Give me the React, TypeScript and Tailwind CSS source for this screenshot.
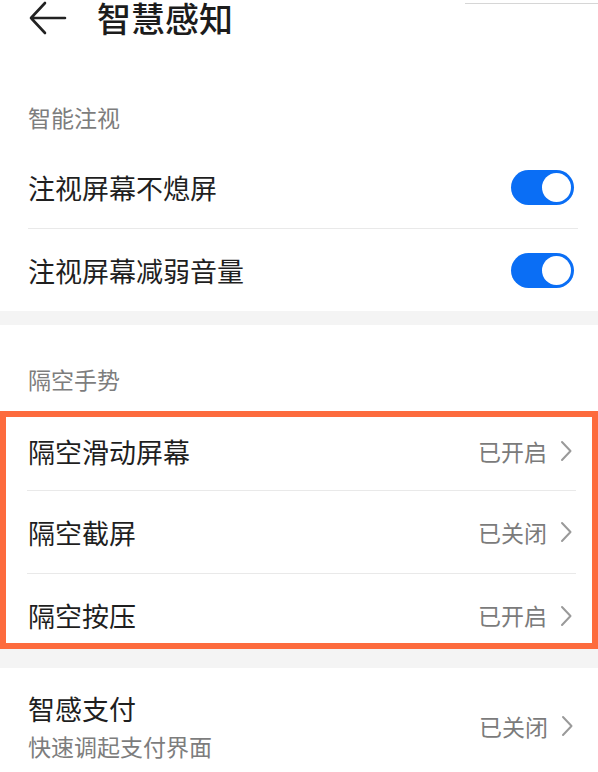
import React from "react";

const FONT = "font-['Noto_Sans_CJK_SC','Noto_Sans',sans-serif]";

/** Blue on-state switch */
function Toggle() {
  return (
    <div className="flex h-[35px] w-[63px] items-center justify-end rounded-full bg-[#0a6ef5] px-[3px]">
      <div className="h-[29px] w-[29px] rounded-full bg-white" />
    </div>
  );
}

function Chevron() {
  return (
    <svg width="14" height="22" viewBox="0 0 14 22" fill="none" className="shrink-0">
      <path d="M3 2 L11.5 11 L3 20" stroke="#9a9a9a" strokeWidth="2" strokeLinecap="round" strokeLinejoin="round" />
    </svg>
  );
}

function Value({ text }: { text: string }) {
  return (
    <div className="flex items-center gap-[12px]">
      <span className="text-[23px] leading-none text-[#7b7b7b]">{text}</span>
      <Chevron />
    </div>
  );
}

function Divider({ className = "" }: { className?: string }) {
  return <div className={`h-px bg-[#e9e9e9] ${className}`} />;
}

export default function App() {
  return (
    <div className={`relative h-[772px] w-[598px] overflow-hidden bg-white ${FONT}`}>
      {/* Header */}
      <div className="flex h-[36px] items-center">
        <svg width="40" height="34" viewBox="0 0 40 34" fill="none" className="ml-[28px]">
          <path d="M17 2 L3 17 L17 32 M3 17 L37 17" stroke="#222" strokeWidth="2.6" strokeLinecap="round" strokeLinejoin="round" />
        </svg>
        <h1 className="ml-[29px] text-[34px] font-medium leading-none text-[#1c1c1c]">智慧感知</h1>
        <div className="mb-auto ml-auto mt-[3px] h-px w-[133px] bg-[#d6d6d6]" />
      </div>

      {/* 智能注视 */}
      <div className="px-[28px] pb-[17px] pt-[70px] text-[23px] leading-none text-[#7d7d7d]">智能注视</div>
      <div className="flex h-[82px] items-center justify-between pl-[28px] pr-[24px]">
        <span className="text-[27px] leading-none text-[#1f1f1f]">注视屏幕不熄屏</span>
        <Toggle />
      </div>
      <Divider className="ml-[28px] mr-[20px]" />
      <div className="flex h-[82px] items-center justify-between pl-[28px] pr-[24px]">
        <span className="text-[27px] leading-none text-[#1f1f1f]">注视屏幕减弱音量</span>
        <Toggle />
      </div>
      <div className="h-[14px] bg-[#f4f4f4]" />

      {/* 隔空手势 */}
      <div className="px-[28px] pb-[20px] pt-[43px] text-[23px] leading-none text-[#7d7d7d]">隔空手势</div>
      <div className="border-[6px] border-[#fd6b3d]">
        <div className="flex h-[73px] items-center justify-between pb-[5px] pl-[22px] pr-[19px]">
          <span className="text-[27px] leading-none text-[#1f1f1f]">隔空滑动屏幕</span>
          <Value text="已开启" />
        </div>
        <Divider className="ml-[21px] mr-[16px]" />
        <div className="flex h-[82px] items-center justify-between pl-[22px] pr-[19px]">
          <span className="text-[27px] leading-none text-[#1f1f1f]">隔空截屏</span>
          <Value text="已关闭" />
        </div>
        <Divider className="ml-[21px] mr-[16px]" />
        <div className="flex h-[69px] items-center justify-between pl-[22px] pr-[19px] pt-[14px]">
          <span className="text-[27px] leading-none text-[#1f1f1f]">隔空按压</span>
          <Value text="已开启" />
        </div>
      </div>
      <div className="h-[19px] bg-[#f4f4f4]" />

      {/* 智感支付 */}
      <div className="flex h-[104px] items-center justify-between pl-[28px] pr-[24px] pt-[12px]">
        <div className="flex flex-col gap-[13px]">
          <span className="text-[27px] leading-none text-[#1f1f1f]">智感支付</span>
          <span className="text-[23px] leading-none text-[#7d7d7d]">快速调起支付界面</span>
        </div>
        <Value text="已关闭" />
      </div>
    </div>
  );
}
